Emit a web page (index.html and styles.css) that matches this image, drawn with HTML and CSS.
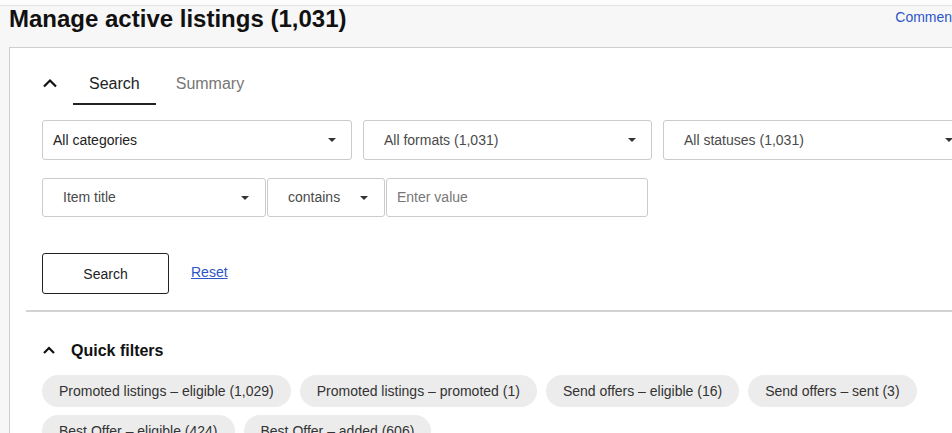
FILE: index.html
```html
<!DOCTYPE html>
<html lang="en">
<head>
<meta charset="UTF-8">
<meta name="viewport" content="width=device-width, initial-scale=1.0">
<title>Manage active listings</title>
<link rel="stylesheet" href="styles.css">
</head>
<body>

<div class="strip"></div>

<div class="page">
    <div class="top">
        <h1>Manage active listings (1,031)</h1>
        <a class="comments" href="#">Comments</a>
    </div>

    <div class="card">
        <div class="tabs">
            <svg class="chev" width="16" height="10" viewBox="0 0 16 10"><path d="M2 8.5 L8 2.5 L14 8.5" fill="none" stroke="#111" stroke-width="2.2"/></svg>
            <div class="tab active">Search</div>
            <div class="tab">Summary</div>
        </div>

        <div class="row first">
            <div class="select w1 pad-s">All categories<span class="caret"></span></div>
            <div class="select w2">All formats (1,031)<span class="caret"></span></div>
            <div class="select w3">All statuses (1,031)<span class="caret"></span></div>
        </div>

        <div class="row second">
            <div class="select field w4">Item title<span class="caret"></span></div>
            <div class="select field w5">contains<span class="caret"></span></div>
            <div class="select field w6 pad-s placeholder">Enter value</div>
        </div>

        <div class="actions">
            <button class="btn">Search</button>
            <a class="reset" href="#">Reset</a>
        </div>

        <div class="divider"></div>

        <div class="quick">
            <svg class="chev small" width="14" height="10" viewBox="0 0 14 10"><path d="M2 8 L7 3 L12 8" fill="none" stroke="#111" stroke-width="2.2"/></svg>
            <span>Quick filters</span>
        </div>

        <div class="chips">
            <div class="chip">Promoted listings – eligible (1,029)</div>
            <div class="chip">Promoted listings – promoted (1)</div>
            <div class="chip">Send offers – eligible (16)</div>
            <div class="chip">Send offers – sent (3)</div>
            <div class="chip">Best Offer – eligible (424)</div>
            <div class="chip">Best Offer – added (606)</div>
        </div>
    </div>
</div>

</body>
</html>
```

FILE: styles.css
```css
html, body {
    margin: 0;
    overflow: hidden;
}
body {
    font-family: Arial, "Liberation Sans", sans-serif;
    background: #f7f7f7;
    color: #111;
}
.strip {
    height: 5px;
    background: #fdfdfd;
    border-bottom: 1px solid #e3e3e3;
}
.page {
    width: 1000px;
}
.top {
    display: flex;
    align-items: center;
    justify-content: space-between;
    width: 954px;
    padding-left: 9px;
    height: 26px;
}
.top h1 {
    margin: 0;
    font-size: 24px;
    font-weight: bold;
    color: #111;
}
.comments {
    font-size: 14px;
    color: #2c55c7;
    text-decoration: none;
    margin-top: -5px;
}
.card {
    margin: 15px 0 0 9px;
    width: 990px;
    background: #fff;
    border: 1px solid #cfcfcf;
    padding: 14px 0 20px 32px;
}
.tabs {
    display: flex;
    align-items: center;
}
.chev {
    margin: 0 15px 0 0;
    position: relative;
    top: -1px;
}
.tab {
    font-size: 16px;
    line-height: 20px;
    padding: 12px 16px 9px;
    color: #767676;
    border-bottom: 2px solid transparent;
}
.tab.active {
    color: #222;
    border-bottom-color: #222;
    margin-right: 4px;
}
.row {
    display: flex;
}
.row.first {
    margin-top: 15px;
    gap: 11px;
}
.row.second {
    margin-top: 18px;
    gap: 1px;
}
.select {
    position: relative;
    box-sizing: border-box;
    height: 40px;
    border: 1px solid #cbcbcb;
    border-radius: 3px;
    padding-left: 20px;
    font-size: 14px;
    line-height: 38px;
    color: #4a4a4a;
}
.select.field {
    height: 39px;
    line-height: 37px;
}
.pad-s {
    padding-left: 10px;
    color: #222;
}
.placeholder {
    color: #777;
}
.w1 { width: 310px; }
.w2 { width: 289px; }
.w3 { width: 306px; }
.w4 { width: 224px; }
.w5 { width: 118px; }
.w6 { width: 262px; }
.caret {
    position: absolute;
    right: 15px;
    top: 17px;
    width: 0;
    height: 0;
    border-left: 4px solid transparent;
    border-right: 4px solid transparent;
    border-top: 4px solid #333;
}
.w4 .caret, .w5 .caret {
    right: 16px;
}
.actions {
    display: flex;
    align-items: center;
    margin-top: 36px;
}
.btn {
    width: 127px;
    height: 41px;
    background: #fff;
    border: 1px solid #222;
    border-radius: 3px;
    font-family: Arial, "Liberation Sans", sans-serif;
    font-size: 14px;
    color: #222;
    padding-top: 2px;
}
.reset {
    margin-left: 22px;
    margin-top: -4px;
    font-size: 14px;
    color: #2c55c7;
}
.divider {
    margin: 16px 0 0 -16px;
    border-top: 2px solid #d3d3d3;
}
.quick {
    display: flex;
    align-items: center;
    margin-top: 30px;
    font-size: 16px;
    font-weight: bold;
}
.chev.small {
    margin-right: 15px;
}
.chips {
    display: flex;
    flex-wrap: wrap;
    gap: 8px 9px;
    margin-top: 15px;
    width: 900px;
}
.chip {
    height: 32px;
    line-height: 32px;
    padding: 0 17px;
    border-radius: 16px;
    background: #ececec;
    font-size: 14px;
    color: #333;
}
```
